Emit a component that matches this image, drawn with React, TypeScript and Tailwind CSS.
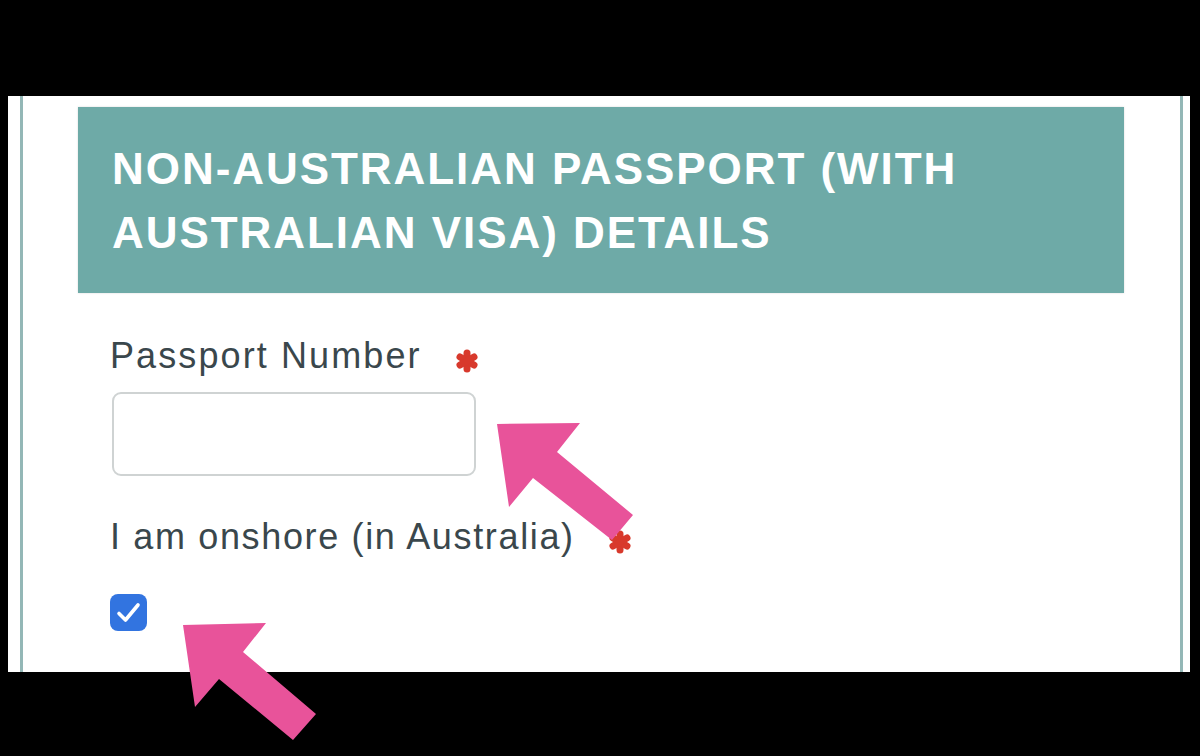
import React from "react";

function Asterisk() {
  return (
    <svg width="26" height="26" viewBox="0 0 26 26" className="block">
      <g stroke="#d8392c" strokeWidth="7" strokeLinecap="round">
        <line x1="13" y1="5" x2="13" y2="21" />
        <line x1="6" y1="9" x2="20" y2="17" />
        <line x1="6" y1="17" x2="20" y2="9" />
      </g>
    </svg>
  );
}

export default function App() {
  return (
    <div className="relative w-[1200px] h-[756px] bg-black overflow-hidden font-['Liberation_Sans',Arial,sans-serif]">
      <div className="pt-[96px] pl-2 pr-[10px]">
        <div className="bg-white h-[576px] pl-3 pr-[7px]">
          <div className="h-full border-l-[3px] border-r-[3px] border-[#93b7b6] pl-[55px] pr-[56px] pt-[11px]">
            <div className="bg-[#6eaaa7] pt-[30px] pb-[28px] px-[34px] shadow-[0_0_2px_rgba(0,0,0,0.15)]">
              <h2 className="text-white font-bold text-[44px] leading-[64px] tracking-[1.95px]">
                NON-AUSTRALIAN PASSPORT (WITH
                <br />
                AUSTRALIAN VISA) DETAILS
              </h2>
            </div>
            <div className="pl-8">
              <div className="mt-[43px] flex items-center text-[#3a474c] text-[36px] leading-[40px] tracking-[2.1px]">
                <span>Passport Number</span>
                <span className="ml-[32px] mt-[10px]">
                  <Asterisk />
                </span>
              </div>
              <div className="mt-[16px] ml-[2px] w-[364px] h-[84px] rounded-[9px] border-2 border-[#cfd3d3] bg-white" />
              <div className="mt-[41px] flex items-center text-[#3a474c] text-[36px] leading-[40px] tracking-[1.65px]">
                <span>I am onshore (in Australia)</span>
                <span className="ml-[32px] mt-[10px]">
                  <Asterisk />
                </span>
              </div>
              <div className="mt-[37px] w-[37px] h-[37px] rounded-[8px] bg-[#3274e0] relative">
                <svg className="absolute inset-0" width="37" height="37" viewBox="0 0 37 37">
                  <path d="M9 19.5 L15.5 26 L28 11" fill="none" stroke="white" strokeWidth="3.6" strokeLinecap="round" strokeLinejoin="round" />
                </svg>
              </div>
            </div>
          </div>
        </div>
      </div>
      <svg className="absolute inset-0 pointer-events-none" width="1200" height="756" viewBox="0 0 1200 756">
        <polygon points="497,424 580,423 557,452 633,515 612,540 533,478 509,507" fill="#e8539a" />
        <polygon points="183,625 266,623 243,652 316,714 293,740 219,679 195,707" fill="#e8539a" />
      </svg>
    </div>
  );
}
